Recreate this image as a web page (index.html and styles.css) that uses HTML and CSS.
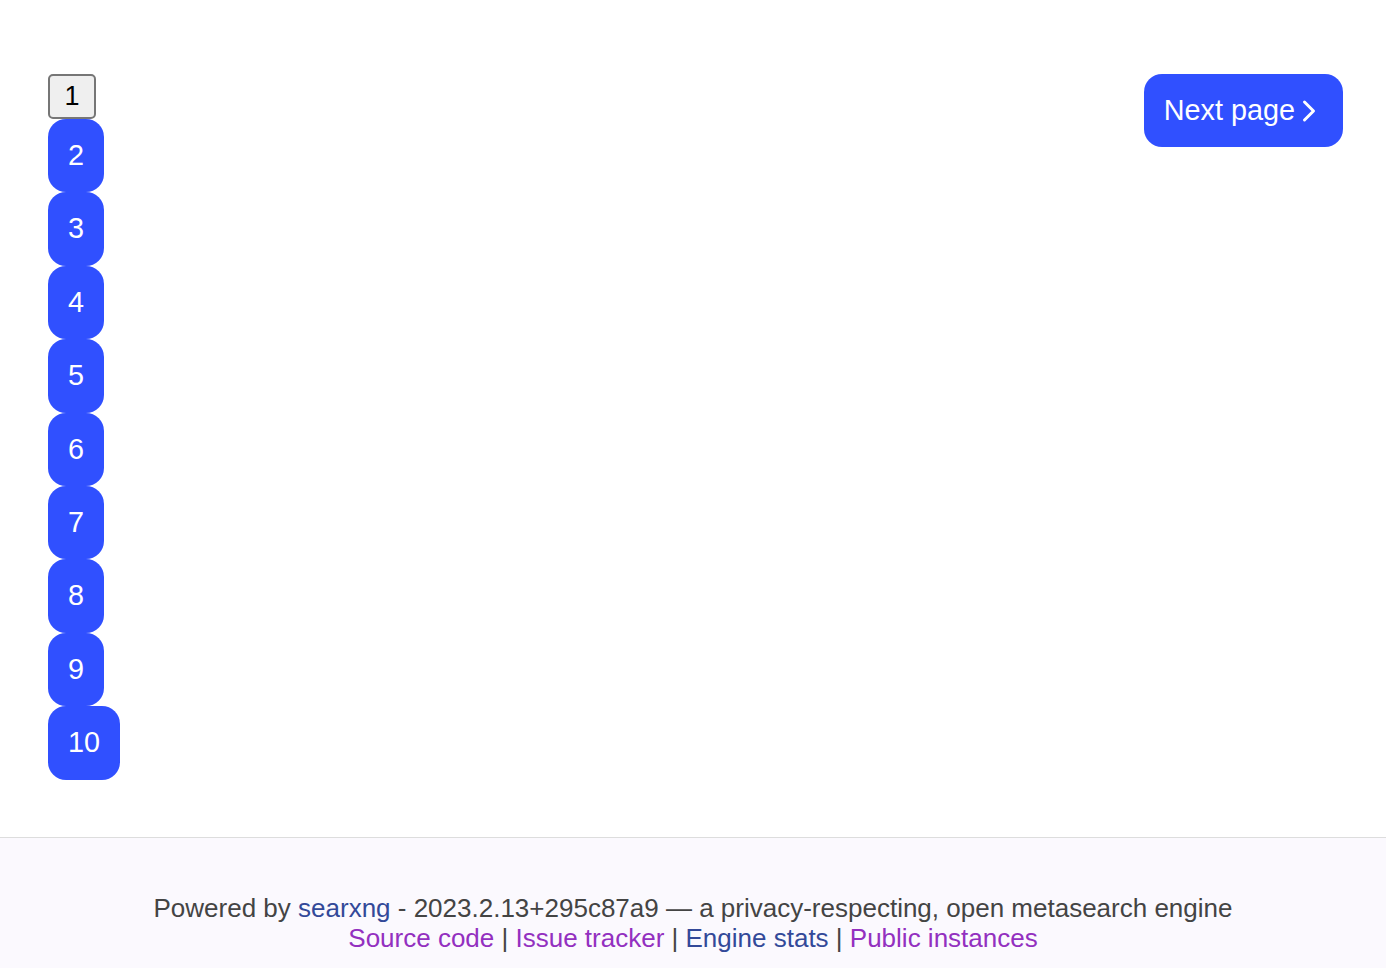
FILE: index.html
```html
<!DOCTYPE html>
<html lang="en">
<head>
<meta charset="utf-8">
<title>SearXNG</title>
<link rel="stylesheet" href="styles.css">
</head>
<body>
<main class="page">
  <div class="pages">
    <button class="current">1</button>
    <button class="num">2</button>
    <button class="num">3</button>
    <button class="num">4</button>
    <button class="num">5</button>
    <button class="num">6</button>
    <button class="num">7</button>
    <button class="num">8</button>
    <button class="num">9</button>
    <button class="num">10</button>
  </div>
  <button class="next">Next page<svg class="chev" viewBox="0 0 512 512" aria-hidden="true"><polyline points="184 112 328 256 184 400" fill="none" stroke="currentColor" stroke-width="48" stroke-linecap="round" stroke-linejoin="round"/></svg></button>
</main>
<footer class="footer">
  <p class="line">Powered by <a class="link" href="#">searxng</a> - 2023.2.13+295c87a9 — a privacy-respecting, open metasearch engine<br>
  <a class="visited" href="#">Source code</a> | <a class="visited" href="#">Issue tracker</a> | <a class="link" href="#">Engine stats</a> | <a class="visited" href="#">Public instances</a></p>
</footer>
</body>
</html>
```
FILE: styles.css
```css
html, body {
  margin: 0;
  padding: 0;
  background: #fff;
  font-family: "Liberation Sans", Arial, sans-serif;
}
.page {
  display: flex;
  justify-content: space-between;
  align-items: flex-start;
  padding: 74px 43px 57px 48px;
}
.pages {
  display: flex;
  flex-direction: column;
  align-items: flex-start;
}
.current {
  box-sizing: border-box;
  width: 48px;
  height: 45px;
  margin: 0;
  padding: 0;
  font-family: "Liberation Sans", Arial, sans-serif;
  font-size: 27px;
  line-height: 41px;
  color: #000;
  background: #efefef;
  border: 2px solid #767676;
  border-radius: 5px;
}
.num, .next {
  margin: 0;
  border: 0;
  background: #3050ff;
  color: #fff;
  font-family: "Liberation Sans", Arial, sans-serif;
  font-size: 28.8px;
  line-height: 33.4px;
  padding: 20px;
  border-radius: 18px;
}
.next {
  display: flex;
  align-items: center;
  padding: 20px 18px 20px 20px;
}
.chev {
  width: 32px;
  height: 32px;
  margin-left: -2px;
}
.footer {
  border-top: 1px solid #dddddd;
  background: #fbf9fe;
  height: 130px;
  display: flex;
  justify-content: center;
}
.line {
  margin: 55px 0 0;
  text-align: center;
  font-size: 26px;
  line-height: 30px;
  color: #444;
}
.link {
  color: #334999;
  text-decoration: none;
}
.visited {
  color: #9330c0;
  text-decoration: none;
}
```
